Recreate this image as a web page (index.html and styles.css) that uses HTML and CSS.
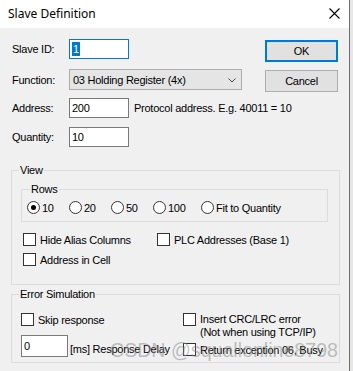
FILE: index.html
```html
<!DOCTYPE html>
<html lang="en">
<head>
<meta charset="utf-8">
<title>Slave Definition</title>
<link rel="stylesheet" href="styles.css">
</head>
<body>
<div class="window">
  <div class="titlebar">
    <span class="title">Slave Definition</span>
    <svg class="close" width="11" height="11" viewBox="0 0 11 11"><path d="M0.5 0.5 L10.5 10.5 M10.5 0.5 L0.5 10.5" stroke="#000" stroke-width="1.1" fill="none"/></svg>
  </div>
  <div class="content">
    <div class="top">
      <div class="form">
        <div class="row r1"><span class="label">Slave ID:</span><div class="input focused"><span class="sel">1</span></div></div>
        <div class="row r2"><span class="label">Function:</span>
          <div class="select"><span>03 Holding Register (4x)</span>
            <svg class="chev" width="8" height="5" viewBox="0 0 8 5"><path d="M0.5 0.5 L4 4 L7.5 0.5" stroke="#444" stroke-width="1" fill="none"/></svg>
          </div>
        </div>
        <div class="row r3"><span class="label">Address:</span><div class="input">200</div><span class="hint">Protocol address. E.g. 40011 = 10</span></div>
        <div class="row r4"><span class="label">Quantity:</span><div class="input">10</div></div>
      </div>
      <div class="buttons">
        <div class="btn default">OK</div>
        <div class="btn">Cancel</div>
      </div>
    </div>

    <fieldset class="group view">
      <legend>View</legend>
      <div class="view-inner">
        <fieldset class="group rows">
          <legend>Rows</legend>
          <div class="radios">
            <label class="radio"><span class="circle on"></span>10</label>
            <label class="radio"><span class="circle"></span>20</label>
            <label class="radio"><span class="circle"></span>50</label>
            <label class="radio"><span class="circle"></span>100</label>
            <label class="radio"><span class="circle"></span>Fit to Quantity</label>
          </div>
        </fieldset>
        <div class="checks">
          <label class="check"><span class="box"></span>Hide Alias Columns</label>
          <label class="check"><span class="box"></span>PLC Addresses (Base 1)</label>
          <label class="check"><span class="box"></span>Address in Cell</label>
        </div>
      </div>
    </fieldset>

    <fieldset class="group error">
      <legend>Error Simulation</legend>
      <div class="error-inner">
        <div class="col">
          <label class="check"><span class="box"></span>Skip response</label>
          <div class="delay"><div class="input wide">0</div><span class="delay-text">[ms] Response Delay</span></div>
        </div>
        <div class="col">
          <label class="check crc"><span class="box"></span><span class="two">Insert CRC/LRC error<br>(Not when using TCP/IP)</span></label>
          <label class="check ret"><span class="box"></span>Return exception 06, Busy</label>
        </div>
      </div>
    </fieldset>
  </div>
  <div class="watermark">CSDN @squallonline8798</div>
</div>
</body>
</html>
```
FILE: styles.css
```css
* { box-sizing: border-box; }
html, body { margin: 0; padding: 0; }
body {
  background: #e6e6e6;
  width: 353px;
  height: 371px;
  overflow: hidden;
  font-family: "Liberation Sans", Arial, sans-serif;
  font-size: 11px;
  letter-spacing: -0.25px;
  color: #000;
}
.window {
  position: relative;
  width: 350px;
  height: 371px;
  background: #f0f0f0;
  border-right: 1px solid #6d6d6d;
}
.titlebar {
  height: 28px;
  background: #fff;
  display: flex;
  align-items: center;
  justify-content: space-between;
  padding: 0 9px 2px 8px;
}
.title {
  font-family: "Noto Sans", "DejaVu Sans", sans-serif;
  font-size: 12px;
  letter-spacing: 0;
}
.content { padding: 11px 9px 0 11px; }
.top { display: flex; }
.form { display: flex; flex-direction: column; padding-left: 1px; flex: none; width: 240px; }
.row { display: flex; align-items: center; white-space: nowrap; }
.label { width: 57px; flex: none; }
.r1 { height: 20px; margin-bottom: 10px; }
.r2 { height: 21px; margin-bottom: 8px; }
.r3 { height: 20px; margin-bottom: 9px; }
.r4 { height: 20px; }
.input {
  width: 60px;
  height: 20px;
  border: 1px solid #7a7a7a;
  background: #fff;
  padding-left: 2px;
  display: flex;
  align-items: center;
  flex: none;
}
.input.focused { border-color: #0078d7; }
.sel {
  background: #0078d7;
  color: #fff;
  padding: 0 1px;
  line-height: 14px;
}
.select {
  width: 173px;
  height: 21px;
  border: 1px solid #adadad;
  background: #e5e5e5;
  display: flex;
  align-items: center;
  justify-content: space-between;
  padding: 0 5px 0 3px;
  flex: none;
}
.chev { margin-top: 1px; }
.hint { margin-left: 5px; white-space: nowrap; }
.buttons { display: flex; flex-direction: column; gap: 8px; margin-top: 1px; margin-left: auto; margin-right: 2px; }
.btn {
  width: 73px;
  height: 22px;
  border: 1px solid #adadad;
  background: #e1e1e1;
  display: flex;
  align-items: center;
  justify-content: center;
}
.btn.default { border: 2px solid #0078d7; }

.group {
  margin: 0;
  padding: 0;
  border: 1px solid #dcdcdc;
  min-width: 0;
}
.group > legend {
  padding: 0 1px;
  line-height: 13px;
  height: 13px;
}
.view { margin-top: 17px; width: 329px; }
.view > legend { margin-left: 7px; }
.view-inner { padding: 0 0 18px 9px; }
.rows { margin-top: 6px; width: 307px; }
.rows > legend { margin-left: 8px; }
.radios {
  display: grid;
  grid-template-columns: 42px 42px 42px 48px auto;
  padding: 5px 0 7px 5px;
}
.radio { display: flex; align-items: center; gap: 2px; height: 13px; white-space: nowrap; }
.circle {
  width: 13px;
  height: 13px;
  border: 1px solid #333;
  border-radius: 50%;
  background: #fff;
  display: flex;
  align-items: center;
  justify-content: center;
  flex: none;
}
.circle.on::after {
  content: "";
  width: 5px;
  height: 5px;
  border-radius: 50%;
  background: #000;
}
.checks {
  display: grid;
  grid-template-columns: 134px auto;
  row-gap: 7px;
  margin-top: 11px;
  padding-left: 2px;
}
.check { display: flex; align-items: center; gap: 4px; height: 13px; white-space: nowrap; }
.box {
  width: 13px;
  height: 13px;
  border: 1px solid #333;
  background: #fff;
  flex: none;
}
.error { margin-top: 3px; width: 329px; }
.error > legend { margin-left: 7px; }
.error-inner {
  display: grid;
  grid-template-columns: 162px auto;
  padding: 12px 0 5px 9px;
}
.col { display: flex; flex-direction: column; }
.delay { display: flex; align-items: flex-start; margin-top: 9px; }
.input.wide { width: 47px; height: 22px; }
.delay-text { margin-left: 2px; margin-top: 8px; line-height: 13px; white-space: nowrap; }
.check.crc { align-items: flex-start; height: 26px; }
.two { line-height: 13px; }
.check.ret { margin-top: 4px; }
.watermark {
  position: absolute;
  left: 110px;
  top: 339px;
  font-size: 19.6px;
  letter-spacing: 0;
  color: rgba(135, 135, 135, 0.5);
  white-space: nowrap;
}
```
